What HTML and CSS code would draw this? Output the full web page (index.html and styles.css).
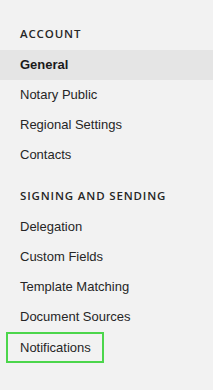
FILE: index.html
```html
<!DOCTYPE html>
<html lang="en">
<head>
  <meta charset="UTF-8" />
  <meta name="viewport" content="width=device-width, initial-scale=1.0"/>
  <title>Settings</title>
  <link rel="stylesheet" href="styles.css">
</head>
<body>
  <nav class="sidebar">
    <div class="section">
      <h3 class="section-title">ACCOUNT</h3>
      <a class="item active" href="#">General</a>
      <a class="item" href="#">Notary Public</a>
      <a class="item" href="#">Regional Settings</a>
      <a class="item" href="#">Contacts</a>
    </div>
    <div class="section">
      <h3 class="section-title">SIGNING AND SENDING</h3>
      <a class="item" href="#">Delegation</a>
      <a class="item" href="#">Custom Fields</a>
      <a class="item" href="#">Template Matching</a>
      <a class="item" href="#">Document Sources</a>
      <a class="item focused" href="#">Notifications</a>
    </div>
  </nav>
</body>
</html>
```

FILE: styles.css
```css
body {
  margin: 0;
  background: #f2f2f2;
  font-family: 'Liberation Sans', Arial, sans-serif;
  color: #1e1e1e;
}

.sidebar {
  padding-top: 24px;
  display: flex;
  flex-direction: column;
  gap: 16px;
}

.section {
  display: flex;
  flex-direction: column;
}

.section-title {
  margin: 0 0 6px;
  padding-left: 20px;
  height: 20px;
  line-height: 20px;
  font-family: 'Open Sans', sans-serif;
  font-size: 11.5px;
  font-weight: 600;
  letter-spacing: 0.85px;
  color: #262626;
}

.item {
  height: 30px;
  line-height: 30px;
  padding-left: 20px;
  font-size: 13px;
  color: #262626;
  text-decoration: none;
}

.item.active {
  background: #e5e5e5;
  font-weight: bold;
  color: #1a1a1a;
}

.item.focused {
  align-self: flex-start;
  margin-left: 6px;
  padding: 0 11px 0 12px;
  height: 27px;
  line-height: 27px;
  border: 2px solid #4cd64c;
}
```
